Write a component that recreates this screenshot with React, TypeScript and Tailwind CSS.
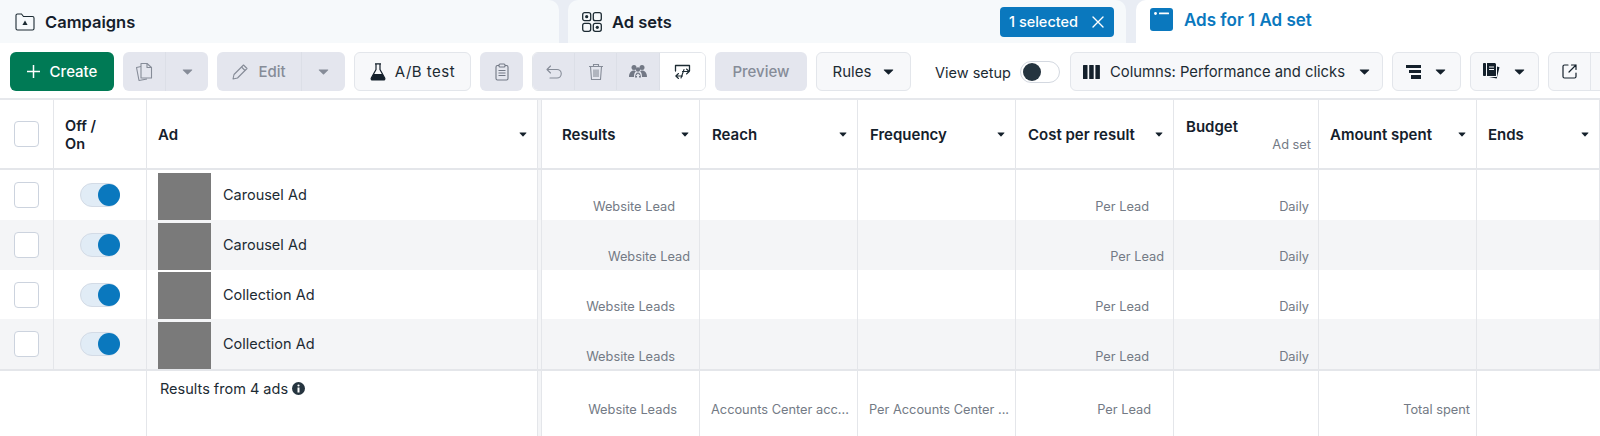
import React from "react";

const Caret = ({ className = "" }: { className?: string }) => (
  <svg width="11" height="6" viewBox="0 0 12 7" className={`shrink-0 ${className}`}>
    <path d="M1 .5h10a.6.6 0 0 1 .4 1L6.600 6a.8.8 0 0 1-1.200 0L.6 1.500A.6.6 0 0 1 1 .5z" fill="currentColor" />
  </svg>
);
const SmallCaret = () => (
  <svg width="8" height="5" viewBox="0 0 9 6" className="text-[#14202b] shrink-0">
    <path d="M.8.5h7.400a.5.5 0 0 1 .4.8L5 5.200a.7.7 0 0 1-1 0L.4 1.300A.5.5 0 0 1 .8.5z" fill="currentColor" />
  </svg>
);

const GRID = "grid grid-cols-[54px_93px_391px_4px_158px_158px_158px_158px_145px_158px_122px_1px]";
const divider = "border-r border-[#e4e6ea]";

const Checkbox = () => (
  <div className="h-[26px] w-[25px] rounded-[4px] border border-[#ccd3de] bg-white" />
);

const Toggle = () => (
  <div className="flex h-6 w-10 items-center justify-end rounded-full border border-[#d3dbe6] bg-[#e1ecf6]">
    <div className="h-[22px] w-[22px] -mr-px rounded-full bg-[#0a78be]" />
  </div>
);

const Head = ({ label, pl }: { label: string; pl: string }) => (
  <div className={`flex items-center justify-between pr-[10px] ${pl} ${divider}`}>
    <span className="mt-[2px] text-[15px] font-semibold text-[#14202b]">{label}</span>
    <SmallCaret />
  </div>
);

const Val = ({ text, pad, pb, border = true }: { text?: string; pad: string; pb: string; border?: boolean }) => (
  <div className={`flex items-end justify-end text-[12.800px] leading-[15px] text-[#737a85] ${pb} ${pad} ${border ? divider : ""}`}>
    {text}
  </div>
);

const rows = [
  { name: "Carousel Ad", res: "Website Lead", shift: false, bg: "bg-white", h: "h-[50px]", pb: "pb-[6px]" },
  { name: "Carousel Ad", res: "Website Lead", shift: true, bg: "bg-[#f4f5f7]", h: "h-[50px]", pb: "pb-[6px]" },
  { name: "Collection Ad", res: "Website Leads", shift: false, bg: "bg-white", h: "h-[49px]", pb: "pb-[5px]" },
  { name: "Collection Ad", res: "Website Leads", shift: false, bg: "bg-[#f4f5f7]", h: "h-[50px]", pb: "pb-[5px]" },
];

const Tbtn = ({ className, children }: { className: string; children?: React.ReactNode }) => (
  <div className={`flex h-[39px] shrink-0 items-center rounded-[6px] ${className}`}>{children}</div>
);

const outline = "border border-[#e3e6eb] bg-[#f7f8fa] text-[#1c2b33]";
const disabled = "bg-[#e4e6ee] text-[#868c98]";

export default function App() {
  return (
    <div className="h-[436px] w-[1600px] overflow-hidden bg-white font-['Inter',sans-serif]">
      {/* tabs */}
      <div className="flex h-[43px] bg-[#e9edf4]">
        <div className="flex w-[559px] items-center gap-[10px] rounded-tr-[10px] bg-[#f6f9fb] pl-[15px]">
          <svg width="20" height="20" viewBox="0 0 20 20" fill="none" stroke="#1c2b33" strokeWidth="1.1">
            <path d="M1 3.500c0-.8.6-1.500 1.500-1.500h4l2 2.500h9c.8 0 1.500.7 1.500 1.500v10.500c0 .8-.7 1.500-1.500 1.500h-15c-.9 0-1.500-.7-1.500-1.500z" />
            <path d="M10 8.500l2.600 4.500H7.400z" fill="#1c2b33" stroke="none" />
          </svg>
          <span className="mt-[2px] text-[16.500px] font-semibold text-[#14202b]">Campaigns</span>
        </div>
        <div className="ml-[9px] flex w-[558px] items-center rounded-t-[10px] bg-[#f6f9fb] pl-[14px] pr-[12px]">
          <svg width="20" height="20" viewBox="0 0 20 20" fill="none" stroke="#1c2b33" strokeWidth="1.3">
            <rect x="0.7" y="0.7" width="8" height="8" rx="2" />
            <rect x="11.300" y="0.7" width="8" height="8" rx="2" />
            <rect x="0.7" y="11.300" width="8" height="8" rx="2" />
            <rect x="11.300" y="11.300" width="8" height="8" rx="2" />
            <circle cx="4.700" cy="4.700" r="1.600" fill="#1c2b33" stroke="none" />
            <circle cx="15.300" cy="15.300" r="1.600" fill="#1c2b33" stroke="none" />
          </svg>
          <span className="ml-[10px] mt-[2px] text-[16.500px] font-semibold text-[#14202b]">Ad sets</span>
          <div className="ml-auto flex h-[30px] w-[114px] items-center justify-between whitespace-nowrap rounded-[4px] bg-[#0a78be] pl-[9px] pr-[10px] text-[14.500px] font-medium text-white">
            <span>1 selected</span>
            <svg width="12" height="12" viewBox="0 0 12 12" stroke="white" strokeWidth="1.4" strokeLinecap="round">
              <path d="M1 1l10 10M11 1L1 11" />
            </svg>
          </div>
        </div>
        <div className="ml-[10px] flex flex-1 items-start gap-[11px] rounded-tl-[10px] bg-white pl-[14px] pt-[8px]">
          <svg width="23" height="23" viewBox="0 0 23 23">
            <rect width="23" height="23" rx="3" fill="#0a78be" />
            <circle cx="5.500" cy="5.500" r="1.400" fill="white" />
            <rect x="9" y="4.500" width="10" height="1.800" rx="0.5" fill="white" />
          </svg>
          <span className="mt-[1px] text-[17px] font-semibold leading-[23px] text-[#0a78be]">Ads for 1 Ad set</span>
        </div>
      </div>

      {/* toolbar */}
      <div className="flex h-[57px] items-start gap-[9px] overflow-hidden border-b-2 border-[#e6e8ec] pl-[10px] pt-[9px]">
        <Tbtn className="w-[104px] justify-center gap-[10px] bg-[#007a55] text-[15px] font-medium text-white">
          <svg width="13" height="13" viewBox="0 0 13 13" stroke="white" strokeWidth="1.5">
            <path d="M6.500 0v13M0 6.500h13" />
          </svg>
          <span className="mt-[2px]">Create</span>
        </Tbtn>
        <Tbtn className={`w-[85px] ${disabled}`}>
          <div className="flex h-full w-[43px] items-center justify-center border-r border-[#dcdfe7]">
            <svg width="18" height="20" viewBox="0 0 18 20" fill="none" stroke="#868c98" strokeWidth="1.1" strokeLinejoin="round">
              <path d="M6 1.500h6l4.500 4v10.500H6z" />
              <path d="M12 1.500v4h4.500" />
              <path d="M6 4.500l-4.500 1 2.500 13 8-1.500" />
            </svg>
          </div>
          <div className="flex flex-1 justify-center"><Caret /></div>
        </Tbtn>
        <Tbtn className={`w-[128px] text-[15px] font-medium ${disabled}`}>
          <div className="flex h-full w-[85px] items-center justify-center gap-[10px] border-r border-[#dcdfe7]">
            <svg width="16" height="16" viewBox="0 0 16 16" fill="none" stroke="#868c98" strokeWidth="1.1" strokeLinejoin="round">
              <path d="M1 15l1-4.500L11.500 1l3.500 3.500L5.500 14z" />
              <path d="M9.500 3l3.500 3.500" />
            </svg>
            <span className="mt-[2px]">Edit</span>
          </div>
          <div className="flex flex-1 justify-center"><Caret /></div>
        </Tbtn>
        <Tbtn className={`w-[117px] justify-center gap-[9px] text-[15px] ${outline}`}>
          <svg width="16" height="18" viewBox="0 0 16 18" fill="none" stroke="#14202b" strokeWidth="1.2">
            <path d="M5 .8h6M6 1v5.500L1.300 15c-.5 1 .1 2 1.200 2h11c1.100 0 1.700-1 1.200-2L10 6.500V1" />
            <path d="M3.500 11h9l2.300 4.200c.4.900-.1 1.800-1.200 1.800H2.400c-1 0-1.600-.9-1.200-1.800z" fill="#14202b" stroke="none" />
          </svg>
          <span className="mt-[2px] tracking-[0.5px]">A/B test</span>
        </Tbtn>
        <Tbtn className={`w-[43px] justify-center ${disabled}`}>
          <svg width="14" height="18" viewBox="0 0 14 18" fill="none" stroke="#727885" strokeWidth="1.1">
            <rect x="1" y="2.500" width="12" height="14.500" rx="1.500" />
            <rect x="4" y="1" width="6" height="3" rx="1" fill="#e4e6ee" />
            <path d="M3.500 7.500h7M3.500 10h7M3.500 12.500h7" />
          </svg>
        </Tbtn>
        <div className="flex h-[39px] w-[174px] shrink-0 overflow-hidden rounded-[6px] border border-[#e3e6eb]">
          <div className={`flex w-[42px] items-center justify-center border-r border-[#dcdfe7] ${disabled}`}>
            <svg width="16" height="14" viewBox="0 0 16 14" fill="none" stroke="#868c98" strokeWidth="1.1" strokeLinecap="round" strokeLinejoin="round">
              <path d="M4.500 1L1 4.500 4.500 8M1 4.500h10a4 4 0 0 1 0 8.500H4" />
            </svg>
          </div>
          <div className={`flex w-[42px] items-center justify-center border-r border-[#dcdfe7] ${disabled}`}>
            <svg width="16" height="17" viewBox="0 0 16 17" fill="none" stroke="#868c98" strokeWidth="1.1">
              <path d="M1 3.500h14M5.500 3.500V1.500h5v2M2.500 3.500l1 13h9l1-13M6 6.500v7.500M8 6.500v7.500M10 6.500v7.500" />
            </svg>
          </div>
          <div className={`flex w-[43px] items-center justify-center border-r border-[#dcdfe7] ${disabled}`}>
            <svg width="18" height="16" viewBox="0 0 18 16" fill="#727885">
              <circle cx="5" cy="3.500" r="2.500" />
              <circle cx="13" cy="3.500" r="2.500" />
              <circle cx="9" cy="5.500" r="2.200" />
              <path d="M0 13c0-4 2-6.500 5-6.500 1 0 1.500.3 2 .6C5.500 8.500 5 10.500 5 13zM18 13c0-4-2-6.500-5-6.500-1 0-1.500.3-2 .6 1.500 1.400 2 3.400 2 5.900zM6 13.500c0-3 1.200-5 3-5s3 2 3 5z" />
              <path d="M9 9.500l2.500 2.500h-1.500v3.500H8V12H6.500z" fill="#e4e6ee" />
            </svg>
          </div>
          <div className="flex flex-1 items-center justify-center bg-white">
            <svg width="17" height="16" viewBox="0 0 17 16" fill="none" stroke="#1c2b33" strokeWidth="1.1" strokeLinecap="round" strokeLinejoin="round">
              <path d="M1.500 7V1.500h14V7" strokeWidth="1.300" />
              <path d="M8.500 7.500H15M12.500 5l2.700 2.500-2.700 2.500" />
              <path d="M8.500 12H2M4.500 9.500L1.800 12l2.700 2.500" />
              <path d="M10 5.500L7 14" />
            </svg>
          </div>
        </div>
        <Tbtn className={`w-[92px] justify-center text-[15px] font-medium ${disabled}`}><span className="mt-[2px]">Preview</span></Tbtn>
        <Tbtn className={`w-[95px] justify-center gap-[12px] text-[15px] ${outline}`}>
          <span className="mt-[2px]">Rules</span>
          <Caret className="text-[#14202b]" />
        </Tbtn>
        <div className="ml-[15px] flex h-[39px] shrink-0 items-center gap-[9px]">
          <span className="mt-[2px] whitespace-nowrap text-[14.500px] text-[#1c2b33]">View setup</span>
          <div className="flex h-[22px] w-10 items-center rounded-full border border-[#d3d8e0] bg-white">
            <div className="ml-[2px] h-[18px] w-[18px] rounded-full bg-[#25343f]" />
          </div>
        </div>
        <Tbtn className={`ml-[1px] w-[313px] justify-center gap-[10px] text-[14.800px] ${outline}`}>
          <svg width="17" height="14" viewBox="0 0 17 14" fill="#14202b">
            <rect x="0" y="0" width="4.500" height="14" rx="0.500" />
            <rect x="6.200" y="0" width="4.500" height="14" rx="0.500" />
            <rect x="12.400" y="0" width="4.500" height="14" rx="0.500" />
          </svg>
          <span className="mt-[2px] whitespace-nowrap font-normal">Columns: Performance and clicks</span>
          <Caret className="ml-[4px] text-[#14202b]" />
        </Tbtn>
        <Tbtn className={`w-[69px] justify-center gap-[14px] ${outline}`}>
          <svg width="15" height="14" viewBox="0 0 15 14" fill="#14202b">
            <rect x="0" y="0" width="15" height="3" />
            <rect x="3" y="5" width="12" height="3" />
            <rect x="5" y="10" width="10" height="4" />
          </svg>
          <Caret className="text-[#14202b]" />
        </Tbtn>
        <Tbtn className={`w-[69px] justify-center gap-[14px] ${outline}`}>
          <svg width="17" height="17" viewBox="0 0 17 17" fill="#14202b">
            <rect x="0" y="0" width="3" height="13" rx="0.800" />
            <path d="M4 0h7.500c.8 0 1.500.7 1.500 1.500V13H4zM6 3.500v1h5v-1zM6 6v1h5V6z" fillRule="evenodd" />
            <path d="M14 3.500l2.500.8-2.800 11.200L6 14h7.500c.3 0 .5-.2.500-.5z" />
          </svg>
          <Caret className="text-[#14202b]" />
        </Tbtn>
        <Tbtn className={`w-[80px] ${outline}`}>
          <div className="flex h-full w-[42px] items-center justify-center border-r border-[#e3e6eb]">
            <svg width="15" height="15" viewBox="0 0 15 15" fill="none" stroke="#14202b" strokeWidth="1.2" strokeLinecap="round" strokeLinejoin="round">
              <path d="M6 1H2.500C1.600 1 1 1.600 1 2.500v10c0 .9.600 1.500 1.500 1.500h10c.9 0 1.500-.6 1.500-1.500V9M9.500 1H14v4.500M14 1L7 8" />
            </svg>
          </div>
        </Tbtn>
      </div>

      {/* header */}
      <div className={`${GRID} h-[70px] border-b-2 border-[#e4e6ea]`}>
        <div className={`flex items-center pl-[14px] ${divider}`}><Checkbox /></div>
        <div className={`flex items-center pl-[11px] text-[14.500px] font-semibold leading-[18px] text-[#14202b] ${divider}`}>
          <span className="mt-[2px]">Off /<br />On</span>
        </div>
        <div className={`flex items-center justify-between pl-[11px] pr-[10px] ${divider}`}>
          <span className="mt-[2px] text-[15px] font-semibold text-[#14202b]">Ad</span>
          <SmallCaret />
        </div>
        <div className={`${divider} bg-[#f4f5f7]`} />
        <Head label="Results" pl="pl-[20px]" />
        <Head label="Reach" pl="pl-[12px]" />
        <Head label="Frequency" pl="pl-[12px]" />
        <Head label="Cost per result" pl="pl-[12px]" />
        <div className={`flex flex-col pl-[12px] pr-[7px] pt-[17px] ${divider}`}>
          <span className="text-[15px] font-semibold leading-[20px] text-[#14202b]">Budget</span>
          <span className="self-end text-[12.800px] leading-[16px] text-[#737a85]">Ad set</span>
        </div>
        <Head label="Amount spent" pl="pl-[11px]" />
        <div className="flex items-center justify-between pl-[11px] pr-[10px]">
          <span className="mt-[2px] text-[15px] font-semibold text-[#14202b]">Ends</span>
          <SmallCaret />
        </div>
        <div className="bg-[#e4e6ea]" />
      </div>

      {/* rows */}
      {rows.map((r, i) => (
        <div key={i} className={`${GRID} ${r.h} ${r.bg}`}>
          <div className={`flex items-center pl-[14px] ${divider}`}><Checkbox /></div>
          <div className={`flex items-center justify-center ${divider}`}><Toggle /></div>
          <div className={`flex items-end pl-[11px] ${divider}`}>
            <div className="h-[47px] w-[53px] bg-[#7a7a7a]" />
            <span className="ml-[12px] self-center text-[14.500px] text-[#1c2b33]">{r.name}</span>
          </div>
          <div className={`${divider} bg-[#f4f5f7]`} />
          <Val text={r.res} pb={r.pb} pad={r.shift ? "pr-[9px]" : "pr-[24px]"} />
          <Val pb={r.pb} pad="" />
          <Val pb={r.pb} pad="" />
          <Val text="Per Lead" pb={r.pb} pad={r.shift ? "pr-[9px]" : "pr-[24px]"} />
          <Val text="Daily" pb={r.pb} pad="pr-[9px]" />
          <Val pb={r.pb} pad="" />
          <Val pb={r.pb} pad="" border={false} />
          <div className="bg-[#e4e6ea]" />
        </div>
      ))}

      {/* footer */}
      <div className={`${GRID} h-[67px] border-t-2 border-[#e4e6ea]`}>
        <div />
        <div className={divider} />
        <div className={`flex items-start gap-[4px] pl-[13px] pt-[9px] text-[14.500px] leading-[18px] text-[#1c2b33] ${divider}`}>
          Results from 4 ads
          <svg width="13" height="13" viewBox="0 0 13 13" className="mt-[2px]">
            <circle cx="6.500" cy="6.500" r="6.500" fill="#25343f" />
            <rect x="5.500" y="5.500" width="2" height="5" fill="white" />
            <circle cx="6.500" cy="3.500" r="1.100" fill="white" />
          </svg>
        </div>
        <div className={`${divider} bg-[#f4f5f7]`} />
        <Foot text="Website Leads" pad="pr-[22px]" align="justify-end" />
        <Foot text="Accounts Center acc..." pad="pl-[11px]" align="justify-start" />
        <Foot text="Per Accounts Center ..." pad="pl-[11px]" align="justify-start" />
        <Foot text="Per Lead" pad="pr-[22px]" align="justify-end" />
        <Foot pad="" align="" />
        <Foot text="Total spent" pad="pr-[6px]" align="justify-end" />
        <div />
      </div>
    </div>
  );
}

function Foot({ text, pad, align }: { text?: string; pad: string; align: string }) {
  return (
    <div className={`flex pt-[31px] text-[12.800px] leading-[16px] text-[#737a85] whitespace-nowrap ${align} ${pad} ${divider}`}>
      {text}
    </div>
  );
}
